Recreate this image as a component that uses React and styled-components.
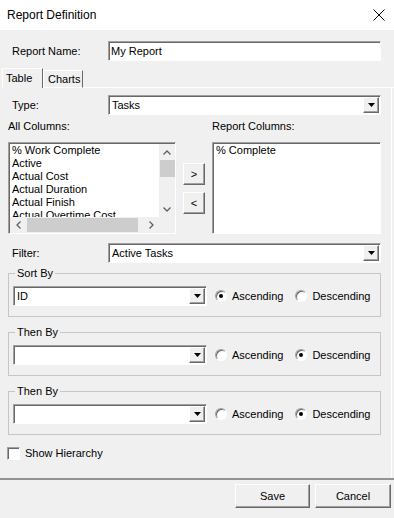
import React from "react";
import styled, { createGlobalStyle, css } from "styled-components";

const GlobalStyle = createGlobalStyle`
  html, body {
    margin: 0;
    padding: 0;
    background: #f0f0f0;
  }
  body {
    font-family: "Liberation Sans", Arial, sans-serif;
    font-size: 11px;
    color: #000;
  }
`;

const sunken = css`
  box-sizing: border-box;
  border: 1px solid;
  border-color: #a0a0a0 #fff #fff #a0a0a0;
  box-shadow: inset 1px 1px 0 #696969;
  background: #fff;
`;

const raised = css`
  box-sizing: border-box;
  background: #f0f0f0;
  border: 1px solid;
  border-color: #fff #696969 #696969 #fff;
  box-shadow: inset -1px -1px 0 #a0a0a0;
`;

const Window = styled.div`
  width: 394px;
  height: 518px;
  display: flex;
  flex-direction: column;
  background: #f0f0f0;
  overflow: hidden;
`;

const TitleBar = styled.div`
  height: 30px;
  flex: none;
  background: #fff;
  display: flex;
  align-items: center;
  justify-content: space-between;
  padding: 0 9px 0 7px;
  font-size: 12px;
`;

const Body = styled.div`
  flex: 1;
  display: flex;
  flex-direction: column;
  min-height: 0;
`;

const FieldRow = styled.div`
  display: grid;
  grid-template-columns: 96px 273px;
  align-items: center;
  padding-left: 12px;
  margin-top: ${(p) => p.$top}px;
  line-height: 13px;
`;

const TextField = styled.div`
  ${sunken}
  height: 20px;
  padding-left: 2px;
  line-height: 18px;
`;

const SelectBox = styled.div`
  ${sunken}
  width: ${(p) => (p.$w ? `${p.$w}px` : "auto")};
  height: 20px;
  padding: 1px;
  display: flex;
  align-items: stretch;
`;

const SelectText = styled.div`
  flex: 1;
  padding-left: 2px;
  line-height: 16px;
  white-space: nowrap;
  overflow: hidden;
`;

const DropButton = styled.div`
  ${raised}
  width: 16px;
  height: 16px;
  display: flex;
  align-items: center;
  justify-content: center;
`;

const TabStrip = styled.div`
  display: flex;
  align-items: flex-end;
  height: 20px;
  margin-top: 7px;
  padding-left: 2px;
`;

const Tab = styled.div`
  box-sizing: border-box;
  width: ${(p) => p.$w}px;
  height: ${(p) => (p.$active ? 20 : 18)}px;
  padding-left: ${(p) => (p.$active ? 3 : 4)}px;
  line-height: ${(p) => (p.$active ? 18 : 16)}px;
  border-top: 1px solid #fff;
  border-left: 1px solid #fff;
  border-right: 1px solid #696969;
  border-bottom: ${(p) => (p.$active ? "none" : "1px solid #fff")};
`;

const TabFill = styled.div`
  flex: 1;
  border-bottom: 1px solid #fff;
`;

const Pane = styled.div`
  flex: 1;
  margin-right: 2px;
  border-right: 1px solid #fff;
`;

const ColumnsGrid = styled.div`
  display: grid;
  grid-template-columns: 168px 36px 169px;
  grid-template-rows: 13px 92px;
  row-gap: 9px;
  padding-left: 8px;
  margin-top: 5px;
  line-height: 13px;
`;

const ListBox = styled.div`
  ${sunken}
  height: 92px;
  padding: 1px 0 0 1px;
  display: grid;
  grid-template-columns: ${(p) => (p.$scroll ? "1fr 16px" : "1fr")};
  grid-template-rows: ${(p) => (p.$scroll ? "1fr 16px" : "1fr")};
  overflow: hidden;
`;

const Items = styled.div`
  padding-left: 2px;
  line-height: 13px;
  white-space: nowrap;
  overflow: hidden;
  min-height: 0;
`;

const VScroll = styled.div`
  background: #f0f0f0;
  display: flex;
  flex-direction: column;
  min-height: 0;
`;

const HScroll = styled.div`
  background: #f0f0f0;
  display: flex;
`;

const ArrowCell = styled.div`
  flex: none;
  width: 16px;
  height: 16px;
  display: flex;
  align-items: center;
  justify-content: center;
`;

const Thumb = styled.div`
  background: #cdcdcd;
  ${(p) =>
    p.$vertical
      ? css`
          height: 17px;
          margin-left: 1px;
          width: 15px;
        `
      : css`
          width: 111px;
          margin: 1px 0 1px 1px;
        `}
`;

const Spacer = styled.div`
  flex: 1;
`;

const Corner = styled.div`
  background: #f0f0f0;
`;

const MoveColumn = styled.div`
  display: flex;
  flex-direction: column;
  gap: 7px;
  padding: 21px 0 0 7px;
`;

const PushButton = styled.button`
  ${raised}
  width: ${(p) => p.$w}px;
  height: ${(p) => p.$h}px;
  padding: 0;
  font: inherit;
  font-size: 11px;
  color: #000;
`;

const GroupBox = styled.fieldset`
  margin: ${(p) => p.$top}px 10px 0 8px;
  padding: 6px 4px 10px 4px;
  border: 1px solid #c6c6c6;
  min-inline-size: 0;
`;

const Legend = styled.legend`
  padding: 0 2px;
  margin-left: 2px;
  line-height: 13px;
`;

const GroupRow = styled.div`
  display: flex;
  align-items: center;
`;

const RadioGroup = styled.div`
  display: flex;
  gap: 12px;
  margin-left: 8px;
`;

const RadioLabel = styled.label`
  display: flex;
  align-items: center;
  gap: 5px;
  line-height: 13px;
`;

const RadioDot = styled.span`
  box-sizing: border-box;
  position: relative;
  width: 12px;
  height: 12px;
  border-radius: 50%;
  border: 1px solid;
  border-color: #a0a0a0 #fff #fff #a0a0a0;
  box-shadow: inset 1px 1px 0 #696969;
  background: #fff;

  &::after {
    content: "";
    display: ${(p) => (p.$on ? "block" : "none")};
    position: absolute;
    left: 3px;
    top: 3px;
    width: 4px;
    height: 4px;
    border-radius: 50%;
    background: #000;
  }
`;

const CheckRow = styled.label`
  display: flex;
  align-items: center;
  gap: 5px;
  padding-left: 7px;
  margin-top: 12px;
  line-height: 13px;
`;

const CheckBox = styled.span`
  ${sunken}
  width: 13px;
  height: 13px;
`;

const Footer = styled.div`
  box-sizing: border-box;
  flex: none;
  height: 40px;
  border-top: 2px solid #939393;
  padding: 4px 3px 0 0;
  display: flex;
  justify-content: flex-end;
  align-items: flex-start;
  gap: 5px;
`;

const CloseIcon = () => (
  <svg width="12" height="12" viewBox="0 0 12 12">
    <path d="M0.5 0.5 L11.5 11.5 M11.5 0.5 L0.5 11.5" stroke="#000" strokeWidth="1" fill="none" />
  </svg>
);

const Triangle = () => (
  <svg width="7" height="4" viewBox="0 0 7 4">
    <polygon points="0,0 7,0 3.5,4" fill="#000" />
  </svg>
);

const Chevron = ({ dir }) => {
  const pts = {
    up: "0.5,4.5 4,1 7.5,4.5",
    down: "0.5,0.5 4,4 7.5,0.5",
    left: "4.5,0.5 1,4 4.5,7.5",
    right: "0.5,0.5 4,4 0.5,7.5",
  }[dir];
  const vertical = dir === "up" || dir === "down";
  return (
    <svg
      width={vertical ? 8 : 5}
      height={vertical ? 5 : 8}
      viewBox={vertical ? "0 0 8 5" : "0 0 5 8"}
    >
      <polyline points={pts} fill="none" stroke="#606060" strokeWidth="1.3" />
    </svg>
  );
};

const Select = ({ value, width }) => (
  <SelectBox $w={width}>
    <SelectText>{value}</SelectText>
    <DropButton>
      <Triangle />
    </DropButton>
  </SelectBox>
);

const Radio = ({ label, on }) => (
  <RadioLabel>
    <RadioDot $on={on} />
    {label}
  </RadioLabel>
);

const SortGroup = ({ title, top, value, ascending }) => (
  <GroupBox $top={top}>
    <Legend>{title}</Legend>
    <GroupRow>
      <Select value={value} width={194} />
      <RadioGroup>
        <Radio label="Ascending" on={ascending} />
        <Radio label="Descending" on={!ascending} />
      </RadioGroup>
    </GroupRow>
  </GroupBox>
);

const allColumns = [
  "% Work Complete",
  "Active",
  "Actual Cost",
  "Actual Duration",
  "Actual Finish",
  "Actual Overtime Cost",
];

const App = () => {
  return (
    <>
      <GlobalStyle />
      <Window>
        <TitleBar>
          <span>Report Definition</span>
          <CloseIcon />
        </TitleBar>
        <Body>
          <FieldRow $top={11}>
            <span>Report Name:</span>
            <TextField>My Report</TextField>
          </FieldRow>
          <TabStrip>
            <Tab $active $w={41}>Table</Tab>
            <Tab $w={40}>Charts</Tab>
            <TabFill />
          </TabStrip>
          <Pane>
            <FieldRow $top={7}>
              <span>Type:</span>
              <Select value="Tasks" />
            </FieldRow>
            <ColumnsGrid>
              <span>All Columns:</span>
              <span />
              <span>Report Columns:</span>
              <ListBox $scroll>
                <Items>
                  {allColumns.map((c) => (
                    <div key={c}>{c}</div>
                  ))}
                </Items>
                <VScroll>
                  <ArrowCell>
                    <Chevron dir="up" />
                  </ArrowCell>
                  <Thumb $vertical />
                  <Spacer />
                  <ArrowCell>
                    <Chevron dir="down" />
                  </ArrowCell>
                </VScroll>
                <HScroll>
                  <ArrowCell>
                    <Chevron dir="left" />
                  </ArrowCell>
                  <Thumb />
                  <Spacer />
                  <ArrowCell>
                    <Chevron dir="right" />
                  </ArrowCell>
                </HScroll>
                <Corner />
              </ListBox>
              <MoveColumn>
                <PushButton $w={22} $h={22}>&gt;</PushButton>
                <PushButton $w={22} $h={22}>&lt;</PushButton>
              </MoveColumn>
              <ListBox>
                <Items>
                  <div>% Complete</div>
                </Items>
              </ListBox>
            </ColumnsGrid>
            <FieldRow $top={9}>
              <span>Filter:</span>
              <Select value="Active Tasks" />
            </FieldRow>
            <SortGroup title="Sort By" top={4} value="ID" ascending />
            <SortGroup title="Then By" top={9} value="" ascending={false} />
            <SortGroup title="Then By" top={9} value="" ascending={false} />
            <CheckRow>
              <CheckBox />
              Show Hierarchy
            </CheckRow>
          </Pane>
        </Body>
        <Footer>
          <PushButton $w={75} $h={24}>Save</PushButton>
          <PushButton $w={76} $h={24}>Cancel</PushButton>
        </Footer>
      </Window>
    </>
  );
};

export default App;
